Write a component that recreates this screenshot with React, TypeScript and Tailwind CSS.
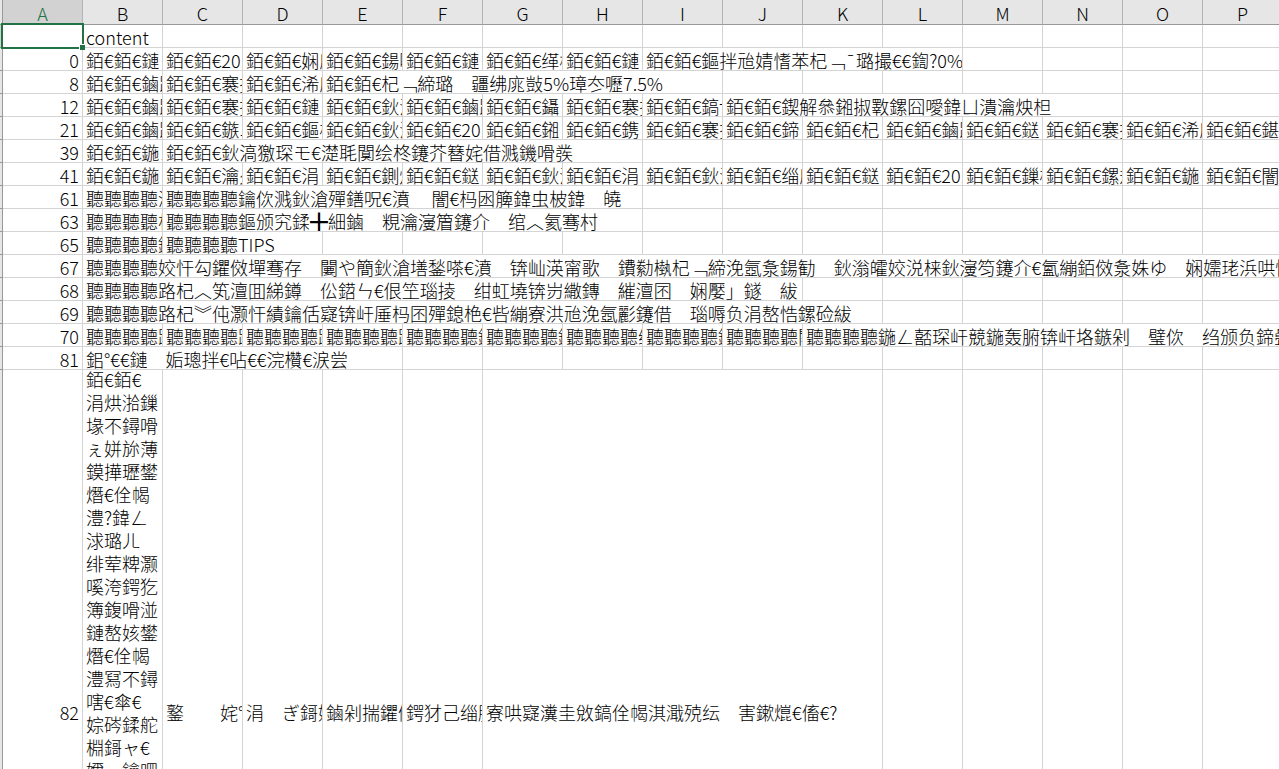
import clsx from 'clsx';

const COLUMNS = ['A', 'B', 'C', 'D', 'E', 'F', 'G', 'H', 'I', 'J', 'K', 'L', 'M', 'N', 'O', 'P'];

interface Cell {
  text: string;
  span?: number;
  wrap?: boolean;
}

interface Row {
  index: string;
  cells: Cell[];
  tall?: boolean;
}

// Most cells start with the same prefix, so keep it in one place
const INDENT = '銆€銆€';
const NBSP = '聽聽聽聽';

const indented = (...parts: string[]): Cell[] => parts.map((p) => ({ text: INDENT + p }));
const padded = (...parts: string[]): Cell[] => parts.map((p) => ({ text: NBSP + p }));

const WRAPPED_TEXT = [
  '銆€銆€',
  '涓烘湁鏁',
  '堟不鐞嗗',
  'ぇ姘旀薄',
  '鏌撶瓑鐢',
  '熸€佺幆',
  '澧?鍏ㄥ',
  '浗璐ㄦ',
  '绯荤粺灏',
  '嗘洿鍔犵',
  '簿鍑嗗湴',
  '鏈嶅姟鐢',
  '熸€佺幆',
  '澧冩不鐞',
  '嗐€傘€',
  '婃硶鍒舵',
  '棩鎶ャ€',
  '嬭　鑰呬',
].join('\n');

const ROWS: Row[] = [
  { index: '', cells: [{ text: 'content' }] },
  {
    index: '0',
    cells: [
      ...indented('鏈', '2018', '娴庡', '鍚嗛', '鏈', '缂栧', '鏈'),
      { text: INDENT + '鏂拌兘婧愭苯杞﹁¯璐撮€€鍧?0%', span: 4 },
    ],
  },
  {
    index: '8',
    cells: [
      ...indented('鏀跨', '褰撳', '浠庡'),
      { text: INDENT + '杞﹁締璐　疆绋庣敱5%璋冭嚦7.5%', span: 5 },
    ],
  },
  {
    index: '12',
    cells: [
      ...indented('鏀跨', '褰撳', '鏈', '鈥滄', '鏀跨', '鑷', '褰撳', '鎬т'),
      { text: INDENT + '鍥解叅鎺掓斁鏍囧噯鍏ㄩ潰瀹炴柦', span: 5 },
    ],
  },
  {
    index: '21',
    cells: indented(
      '鏀跨', '鏃ユ', '鏂板', '鈥滄', '2018', '鎺', '鎸', '褰撳',
      '鍗', '杞﹁', '鏀跨', '鎹', '褰撳', '浠庡', '鍖椾'
    ),
  },
  {
    index: '39',
    cells: [
      ...indented('鍦ㄨ'),
      { text: INDENT + '鈥滈獥琛モ€濋毦闃绘柊鑳芥簮姹借溅鐖嗗彂', span: 6 },
    ],
  },
  {
    index: '41',
    cells: indented(
      '鍦', '瀹夊', '涓', '鍘熷', '鎹', '鈥滄', '涓', '鈥滄',
      '缁庡', '鎹', '2018', '鏁板', '鏍规', '鍦', '闇'
    ),
  },
  {
    index: '61',
    cells: [
      ...padded('浠'),
      { text: NBSP + '鑰佽溅鈥滄殫鐥呪€濆　 闇€杩囦簲鍏虫柀鍏　皢', span: 6 },
    ],
  },
  {
    index: '63',
    cells: [
      ...padded('杞'),
      { text: NBSP + '鏂颁究鍒╋細鏀　粯瀹濅篃鑳介　绾︿氦骞村', span: 6 },
    ],
  },
  { index: '65', cells: [...padded('鍦'), { text: NBSP + 'TIPS', span: 2 }] },
  {
    index: '67',
    cells: [
      {
        text:
          NBSP +
          '姣忓勾鑺傚墠骞存　闄や簡鈥滄墡鍫嗏€濆　锛屾渶甯歌　鐨勬槸杞﹁締浼氬洜鍚勧　鈥滃皬姣涚梾鈥濅笉鑳介€氳繃銆傚洜姝ゆ　娴嬬珯浜哄憳',
        span: 15,
      },
    ],
  },
  {
    index: '68',
    cells: [
      { text: NBSP + '路杞︿笂澶囬綈鐏　伀鍣ㄣ€佷笁瑙掕　绀虹墝锛岃繖鏄　繀澶囨　娴嬮」鐩　紱', span: 9 },
    ],
  },
  {
    index: '69',
    cells: [
      { text: NBSP + '路杞︾伅灏忓績鑰佸寲锛屽厜杩囨殫鎴栬€呰繃寮洪兘浼氬彲鑳借　瑙嗕负涓嶅悎鏍硷紱', span: 10 },
    ],
  },
  {
    index: '70',
    cells: [
      ...padded('跨', '跨', '跨', '跨', '鍦', '鍦', '缂', '鍦', '闂'),
      { text: NBSP + '鍦ㄥ嚭琛屽競鍦轰腑锛屽垎鏃剁　璧佽　绉颁负鍗曡', span: 6 },
    ],
  },
  { index: '81', cells: [{ text: '鈻°€€鏈　姤璁拌€呫€€浣欑€涙尝', span: 4 }] },
  {
    index: '82',
    tall: true,
    cells: [
      { text: WRAPPED_TEXT, wrap: true },
      { text: '鐜　　姹°' },
      { text: '涓　ぎ鎶婄' },
      { text: '鏀剁揣鑺傚' },
      { text: '鍔犲己缁胯' },
      { text: '寮哄寲瀵圭敓鎬佺幆淇濈殑纭　害鏉熴€傗€?', span: 5 },
    ],
  },
];

export default function App() {
  return (
    <main className="h-screen overflow-hidden bg-white font-['Noto_Sans_CJK_SC',sans-serif] text-lg font-light text-black">
      <table className="w-px table-fixed border-separate border-spacing-0">
        <colgroup>
          <col className="w-[3px]" />
          {COLUMNS.map((name) => (
            <col key={name} className="w-20" />
          ))}
        </colgroup>
        <thead>
          <tr>
            <td className="border-r border-b border-[#999999] bg-[#e6e6e6] p-0" />
            {COLUMNS.map((name) => (
              <ColumnHeader key={name} name={name} active={name === 'A'} />
            ))}
          </tr>
        </thead>
        <tbody>
          {ROWS.map((row) => (
            <SheetRow key={row.index} row={row} />
          ))}
        </tbody>
      </table>
    </main>
  );
}

function ColumnHeader({ name, active }: { name: string; active: boolean }) {
  return (
    <th
      scope="col"
      className={clsx(
        'h-[25px] border-r border-b border-[#999999] border-r-[#b4b4b4] p-0 pt-0.5 text-center leading-5 font-light',
        active ? 'bg-[#d2d2d2] text-[#217346]' : 'bg-[#e6e6e6]'
      )}
    >
      {name}
    </th>
  );
}

function SheetRow({ row }: { row: Row }) {
  const used = row.cells.reduce((sum, cell) => sum + (cell.span ?? 1), 1);
  const blanks = COLUMNS.slice(used);
  const selected = row.index === '';

  return (
    <tr className={row.tall ? 'h-[683px]' : 'h-[23px]'}>
      <td
        className={clsx(
          'border-r border-b border-[#999999] p-0',
          selected ? 'bg-[#d2d2d2]' : 'bg-[#e6e6e6]'
        )}
      />
      {selected ? (
        <td className="relative border-r border-b border-[#d4d4d4] p-0">
          <div className="absolute -inset-x-0.5 -top-0.5 -bottom-0.5 border-2 border-[#217346]" />
          <div className="absolute -right-[3px] -bottom-[3px] size-1.5 border-t border-l border-white bg-[#217346]" />
        </td>
      ) : (
        <td className="border-r border-b border-[#d4d4d4] pt-0.5 pr-[3px] pb-0 text-right align-middle leading-5">
          {row.index}
        </td>
      )}
      {row.cells.map((cell, i) => (
        <td
          key={i}
          colSpan={cell.span ?? 1}
          className={clsx(
            'overflow-hidden border-r border-b border-[#d4d4d4] pr-0 pb-0 pl-[3px] whitespace-pre',
            cell.wrap ? 'pt-0 align-top leading-[23px]' : 'pt-0.5 align-middle leading-5'
          )}
        >
          {cell.wrap ? <div className="-mt-0.5">{cell.text}</div> : cell.text}
        </td>
      ))}
      {blanks.map((name) => (
        <td key={name} className="border-r border-b border-[#d4d4d4] p-0" />
      ))}
    </tr>
  );
}
